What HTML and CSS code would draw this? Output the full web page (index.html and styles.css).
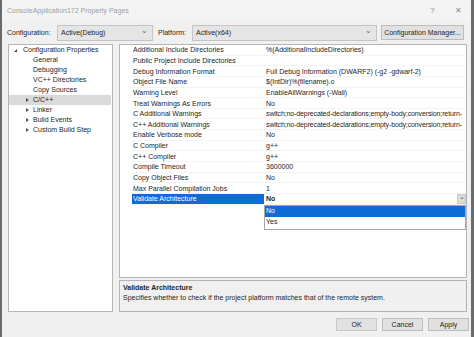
FILE: index.html
```html
<!DOCTYPE html>
<html lang="en">
<head>
  <meta charset="UTF-8" />
  <title>ConsoleApplication172 Property Pages</title>
  <link rel="stylesheet" href="styles.css">
</head>
<body>
  <div class="window">
    <div class="titlebar">
      <span class="title">ConsoleApplication172 Property Pages</span>
      <span class="help">?</span>
      <span class="close">&#x2715;</span>
    </div>

    <div class="toolbar">
      <span class="lbl lbl-config">Configuration:</span>
      <div class="select select-config"><span>Active(Debug)</span><span class="chev">&#x2304;</span></div>
      <span class="lbl lbl-platform">Platform:</span>
      <div class="select select-platform"><span>Active(x64)</span><span class="chev">&#x2304;</span></div>
      <button class="btn btn-manager">Configuration Manager...</button>
    </div>

    <div class="main">
      <div class="tree">
        <div class="node root"><span class="tri-open"></span>Configuration Properties</div>
        <div class="node child">General</div>
        <div class="node child">Debugging</div>
        <div class="node child">VC++ Directories</div>
        <div class="node child">Copy Sources</div>
        <div class="node child sel"><span class="tri-closed"></span>C/C++</div>
        <div class="node child"><span class="tri-closed"></span>Linker</div>
        <div class="node child"><span class="tri-closed"></span>Build Events</div>
        <div class="node child"><span class="tri-closed"></span>Custom Build Step</div>
      </div>

      <div class="right">
        <div class="grid">
          <div class="row"><span class="name">Additional Include Directories</span><span class="val">%(AdditionalIncludeDirectories)</span></div>
          <div class="row"><span class="name">Public Project Include Directories</span><span class="val"></span></div>
          <div class="row"><span class="name">Debug Information Format</span><span class="val">Full Debug Information (DWARF2) (-g2 -gdwarf-2)</span></div>
          <div class="row"><span class="name">Object File Name</span><span class="val">$(IntDir)%(filename).o</span></div>
          <div class="row"><span class="name">Warning Level</span><span class="val">EnableAllWarnings (-Wall)</span></div>
          <div class="row"><span class="name">Treat Warnings As Errors</span><span class="val">No</span></div>
          <div class="row"><span class="name">C Additional Warnings</span><span class="val tight">switch;no-deprecated-declarations;empty-body;conversion;return-</span></div>
          <div class="row"><span class="name">C++ Additional Warnings</span><span class="val tight">switch;no-deprecated-declarations;empty-body;conversion;return-</span></div>
          <div class="row"><span class="name">Enable Verbose mode</span><span class="val">No</span></div>
          <div class="row"><span class="name">C Compiler</span><span class="val">g++</span></div>
          <div class="row"><span class="name">C++ Compiler</span><span class="val">g++</span></div>
          <div class="row"><span class="name">Compile Timeout</span><span class="val">3600000</span></div>
          <div class="row"><span class="name">Copy Object Files</span><span class="val">No</span></div>
          <div class="row"><span class="name">Max Parallel Compilation Jobs</span><span class="val">1</span></div>
          <div class="row active"><span class="name">Validate Architecture</span><span class="val"><b>No</b><span class="drop-btn">&#x2304;</span></span></div>

          <div class="dropdown">
            <div class="opt picked">No</div>
            <div class="opt">Yes</div>
          </div>
        </div>

        <div class="desc">
          <div class="desc-title">Validate Architecture</div>
          <div class="desc-text">Specifies whether to check if the project platform matches that of the remote system.</div>
        </div>
      </div>
    </div>

    <div class="footer">
      <button class="btn btn-ok">OK</button>
      <button class="btn btn-cancel">Cancel</button>
      <button class="btn btn-apply">Apply</button>
    </div>
  </div>
</body>
</html>
```

FILE: styles.css
```css
* {
  box-sizing: border-box;
}
body {
  margin: 0;
  background-color: #6b6b6b;
  font-family: "Liberation Sans", Arial, sans-serif;
  font-size: 7px;
  color: #1e1e1e;
}
.window {
  width: 474px;
  height: 337px;
  background-color: #f0f0f0;
  border-left: 2px solid #6b6b6b;
  border-right: 3px solid #6b6b6b;
  display: flex;
  flex-direction: column;
  overflow: hidden;
}
.titlebar {
  height: 21px;
  display: flex;
  align-items: center;
  padding-left: 5px;
  background-color: #f3f3f3;
  color: #a0a0a0;
}
.title {
  flex: 1;
}
.help {
  width: 25px;
  font-size: 8px;
  color: #8a8a8a;
}
.close {
  width: 16px;
  font-size: 8px;
  color: #8a8a8a;
}
.toolbar {
  height: 23px;
  display: flex;
  align-items: center;
  padding-left: 5px;
}
.lbl-config {
  width: 50px;
}
.lbl-platform {
  margin-left: 5px;
  width: 34px;
}
.select {
  height: 16px;
  display: flex;
  align-items: center;
  justify-content: space-between;
  padding: 0 4px 0 3px;
  background-color: #e5e5e5;
  border: 1px solid #c4c4c4;
}
.select-config {
  width: 96px;
}
.select-platform {
  width: 185px;
}
.chev {
  font-size: 8px;
  color: #666;
  margin-top: -4px;
}
.btn {
  font-family: inherit;
  font-size: 7px;
  color: #1e1e1e;
  background-color: #e1e1e1;
  border: 1px solid #bdbdbd;
  padding: 0;
  height: 15px;
}
.btn-manager {
  margin-left: 4px;
  width: 83px;
}
.main {
  height: 268px;
  display: flex;
  padding-left: 6px;
  gap: 6px;
}
.tree {
  width: 105px;
  height: 268px;
  background-color: #fff;
  border: 1px solid #b4b4b4;
}
.node {
  height: 10px;
  line-height: 10px;
  display: flex;
  align-items: center;
  white-space: nowrap;
}
.root {
  padding-left: 5px;
}
.child {
  padding-left: 24px;
}
.sel {
  background-color: #dadada;
  margin-right: 1px;
}
.tri-open {
  width: 0;
  height: 0;
  border-left: 3px solid transparent;
  border-bottom: 3px solid #444;
  margin-right: 6px;
}
.tri-closed {
  width: 0;
  height: 0;
  border-top: 2.5px solid transparent;
  border-bottom: 2.5px solid transparent;
  border-left: 3px solid #555;
  margin-left: -7px;
  margin-right: 4px;
}
.right {
  width: 348px;
  display: flex;
  flex-direction: column;
  gap: 2px;
}
.grid {
  position: relative;
  height: 234px;
  background-color: #fff;
  border: 1px solid #b4b4b4;
  padding-left: 12px;
}
.row {
  height: 10.65px;
  display: flex;
  align-items: center;
  border-bottom: 1px solid #f3f3f3;
  white-space: nowrap;
}
.name {
  width: 132px;
  height: 100%;
  display: flex;
  align-items: center;
  padding-left: 1px;
}
.val {
  flex: 1;
  height: 100%;
  display: flex;
  align-items: center;
  padding-left: 2px;
  overflow: hidden;
}
.tight {
  letter-spacing: -0.12px;
}
.active .name {
  background-color: #0d6cd6;
  color: #fff;
}
.active .val {
  justify-content: space-between;
}
.drop-btn {
  width: 9px;
  height: 10px;
  background-color: #dcdcdc;
  border: 1px solid #c8c8c8;
  font-size: 7px;
  line-height: 4px;
  text-align: center;
  color: #555;
}
.dropdown {
  position: absolute;
  left: 144px;
  top: 160px;
  width: 202px;
  height: 25px;
  background-color: #fff;
  border: 1px solid #a8a8a8;
}
.opt {
  height: 10.5px;
  line-height: 10.5px;
  padding-left: 1px;
}
.picked {
  background-color: #0d6cd6;
  color: #fff;
}
.desc {
  height: 32px;
  background-color: #f0f0f0;
  border: 1px solid #b4b4b4;
  padding: 3px 0 0 3px;
}
.desc-title {
  font-weight: bold;
  height: 10px;
}
.desc-text {
  height: 10px;
}
.footer {
  height: 25px;
  display: flex;
  justify-content: flex-end;
  align-items: center;
  padding-right: 2px;
  gap: 5px;
}
.footer .btn {
  width: 41px;
  height: 13px;
}
.btn-ok {
  border-color: #c8c8c8;
}
```
